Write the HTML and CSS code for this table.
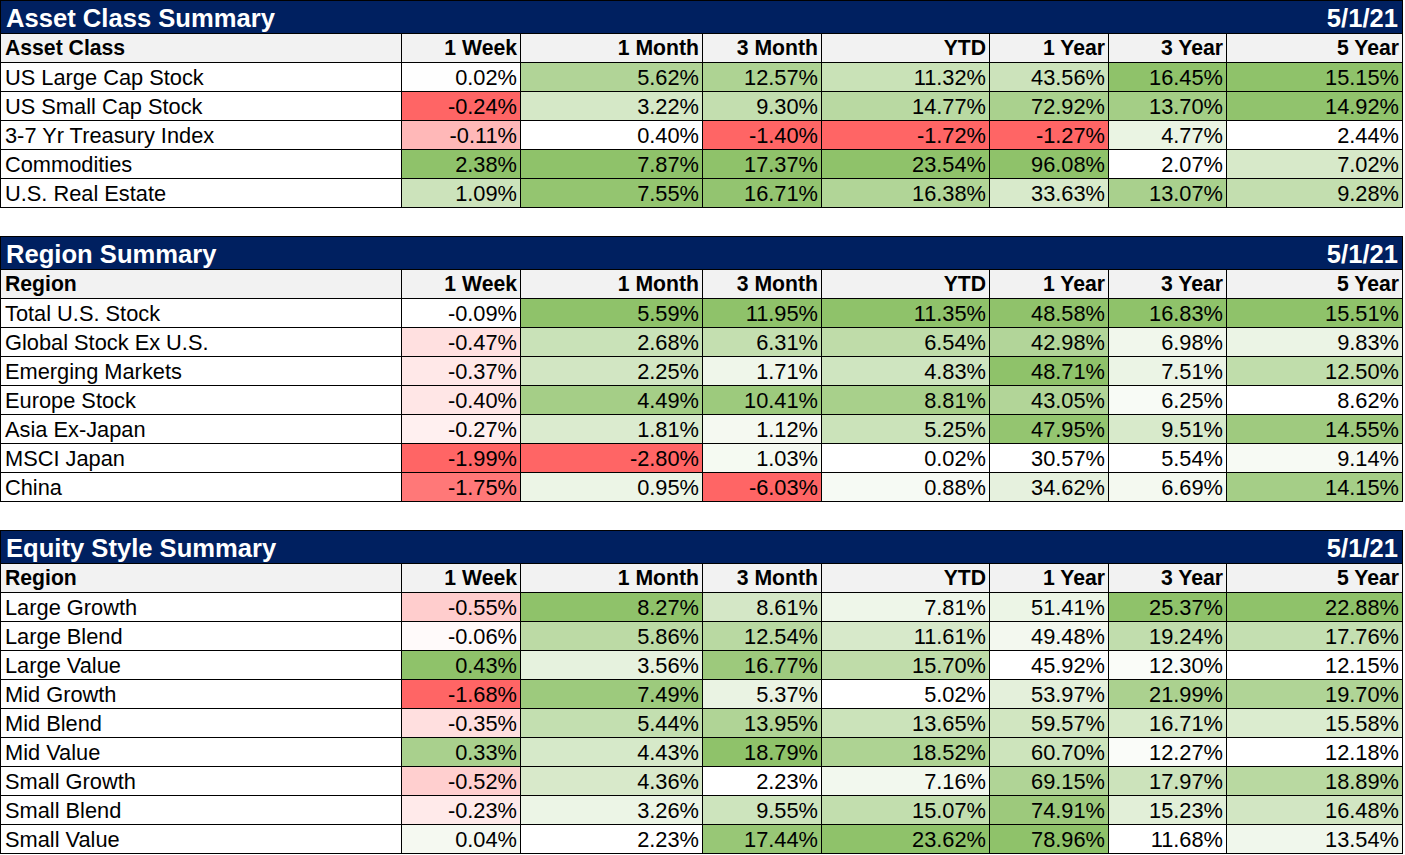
FILE: index.html
```html
<!DOCTYPE html>
<html lang="en">
<head>
<meta charset="utf-8">
<title>Performance Summary</title>
<link rel="stylesheet" href="styles.css">
</head>
<body>
<main class="page">
  <section class="sheet">
    <div class="title"><span>Asset Class Summary</span><span>5/1/21</span></div>
    <div class="grid">
      <div class="h l">Asset Class</div><div class="h">1 Week</div><div class="h">1 Month</div><div class="h">3 Month</div><div class="h">YTD</div><div class="h">1 Year</div><div class="h">3 Year</div><div class="h">5 Year</div>
      <div class="l">US Large Cap Stock</div><div class="v">0.02%</div><div class="v">5.62%</div><div class="v">12.57%</div><div class="v">11.32%</div><div class="v">43.56%</div><div class="v">16.45%</div><div class="v">15.15%</div>
      <div class="l">US Small Cap Stock</div><div class="v">-0.24%</div><div class="v">3.22%</div><div class="v">9.30%</div><div class="v">14.77%</div><div class="v">72.92%</div><div class="v">13.70%</div><div class="v">14.92%</div>
      <div class="l">3-7 Yr Treasury Index</div><div class="v">-0.11%</div><div class="v">0.40%</div><div class="v">-1.40%</div><div class="v">-1.72%</div><div class="v">-1.27%</div><div class="v">4.77%</div><div class="v">2.44%</div>
      <div class="l">Commodities</div><div class="v">2.38%</div><div class="v">7.87%</div><div class="v">17.37%</div><div class="v">23.54%</div><div class="v">96.08%</div><div class="v">2.07%</div><div class="v">7.02%</div>
      <div class="l">U.S. Real Estate</div><div class="v">1.09%</div><div class="v">7.55%</div><div class="v">16.71%</div><div class="v">16.38%</div><div class="v">33.63%</div><div class="v">13.07%</div><div class="v">9.28%</div>
    </div>
  </section>

  <section class="sheet">
    <div class="title"><span>Region Summary</span><span>5/1/21</span></div>
    <div class="grid">
      <div class="h l">Region</div><div class="h">1 Week</div><div class="h">1 Month</div><div class="h">3 Month</div><div class="h">YTD</div><div class="h">1 Year</div><div class="h">3 Year</div><div class="h">5 Year</div>
      <div class="l">Total U.S. Stock</div><div class="v">-0.09%</div><div class="v">5.59%</div><div class="v">11.95%</div><div class="v">11.35%</div><div class="v">48.58%</div><div class="v">16.83%</div><div class="v">15.51%</div>
      <div class="l">Global Stock Ex U.S.</div><div class="v">-0.47%</div><div class="v">2.68%</div><div class="v">6.31%</div><div class="v">6.54%</div><div class="v">42.98%</div><div class="v">6.98%</div><div class="v">9.83%</div>
      <div class="l">Emerging Markets</div><div class="v">-0.37%</div><div class="v">2.25%</div><div class="v">1.71%</div><div class="v">4.83%</div><div class="v">48.71%</div><div class="v">7.51%</div><div class="v">12.50%</div>
      <div class="l">Europe Stock</div><div class="v">-0.40%</div><div class="v">4.49%</div><div class="v">10.41%</div><div class="v">8.81%</div><div class="v">43.05%</div><div class="v">6.25%</div><div class="v">8.62%</div>
      <div class="l">Asia Ex-Japan</div><div class="v">-0.27%</div><div class="v">1.81%</div><div class="v">1.12%</div><div class="v">5.25%</div><div class="v">47.95%</div><div class="v">9.51%</div><div class="v">14.55%</div>
      <div class="l">MSCI Japan</div><div class="v">-1.99%</div><div class="v">-2.80%</div><div class="v">1.03%</div><div class="v">0.02%</div><div class="v">30.57%</div><div class="v">5.54%</div><div class="v">9.14%</div>
      <div class="l">China</div><div class="v">-1.75%</div><div class="v">0.95%</div><div class="v">-6.03%</div><div class="v">0.88%</div><div class="v">34.62%</div><div class="v">6.69%</div><div class="v">14.15%</div>
    </div>
  </section>

  <section class="sheet">
    <div class="title"><span>Equity Style Summary</span><span>5/1/21</span></div>
    <div class="grid">
      <div class="h l">Region</div><div class="h">1 Week</div><div class="h">1 Month</div><div class="h">3 Month</div><div class="h">YTD</div><div class="h">1 Year</div><div class="h">3 Year</div><div class="h">5 Year</div>
      <div class="l">Large Growth</div><div class="v">-0.55%</div><div class="v">8.27%</div><div class="v">8.61%</div><div class="v">7.81%</div><div class="v">51.41%</div><div class="v">25.37%</div><div class="v">22.88%</div>
      <div class="l">Large Blend</div><div class="v">-0.06%</div><div class="v">5.86%</div><div class="v">12.54%</div><div class="v">11.61%</div><div class="v">49.48%</div><div class="v">19.24%</div><div class="v">17.76%</div>
      <div class="l">Large Value</div><div class="v">0.43%</div><div class="v">3.56%</div><div class="v">16.77%</div><div class="v">15.70%</div><div class="v">45.92%</div><div class="v">12.30%</div><div class="v">12.15%</div>
      <div class="l">Mid Growth</div><div class="v">-1.68%</div><div class="v">7.49%</div><div class="v">5.37%</div><div class="v">5.02%</div><div class="v">53.97%</div><div class="v">21.99%</div><div class="v">19.70%</div>
      <div class="l">Mid Blend</div><div class="v">-0.35%</div><div class="v">5.44%</div><div class="v">13.95%</div><div class="v">13.65%</div><div class="v">59.57%</div><div class="v">16.71%</div><div class="v">15.58%</div>
      <div class="l">Mid Value</div><div class="v">0.33%</div><div class="v">4.43%</div><div class="v">18.79%</div><div class="v">18.52%</div><div class="v">60.70%</div><div class="v">12.27%</div><div class="v">12.18%</div>
      <div class="l">Small Growth</div><div class="v">-0.52%</div><div class="v">4.36%</div><div class="v">2.23%</div><div class="v">7.16%</div><div class="v">69.15%</div><div class="v">17.97%</div><div class="v">18.89%</div>
      <div class="l">Small Blend</div><div class="v">-0.23%</div><div class="v">3.26%</div><div class="v">9.55%</div><div class="v">15.07%</div><div class="v">74.91%</div><div class="v">15.23%</div><div class="v">16.48%</div>
      <div class="l">Small Value</div><div class="v">0.04%</div><div class="v">2.23%</div><div class="v">17.44%</div><div class="v">23.62%</div><div class="v">78.96%</div><div class="v">11.68%</div><div class="v">13.54%</div>
    </div>
  </section>
</main>
<script src="script.js"></script>
</body>
</html>
```

FILE: styles.css
```css
* { box-sizing: border-box; }

html, body {
  margin: 0;
  padding: 0;
  background: #ffffff;
}

body {
  font-family: "Liberation Sans", Arial, sans-serif;
  color: #000000;
}

.page {
  display: flex;
  flex-direction: column;
  gap: 28px;
  width: 1403px;
}

.sheet {
  width: 1403px;
  border: 1px solid #000000;
}

.title {
  height: 32px;
  background: #002060;
  color: #ffffff;
  font-weight: bold;
  font-size: 25.6px;
  line-height: 32px;
  padding: 1px 4px 0 5px;
  display: flex;
  justify-content: space-between;
  white-space: nowrap;
}

.grid {
  display: grid;
  grid-template-columns: 400px 118px 181px 118px 167px 118px 117px 175px;
  grid-auto-rows: 28px;
  gap: 1px;
  padding-top: 1px;
  background: #000000;
}

.grid > div {
  background: #ffffff;
  font-size: 21.8px;
  line-height: 26px;
  height: 28px;
  padding: 2px 3px 0 0;
  text-align: right;
  white-space: nowrap;
  overflow: hidden;
}

.grid > .h {
  background: #f2f2f2;
  font-weight: bold;
  font-size: 21.2px;
  padding-top: 1px;
}

.grid > .l {
  text-align: left;
  padding-left: 4px;
  padding-right: 0;
}
```

FILE: script.js
```js
(function () {
  var GREEN = [143, 194, 106];
  var RED = [255, 101, 101];
  function mix(c, t) {
    t = Math.max(0, Math.min(1, t));
    var r = Math.round(255 + (c[0] - 255) * t);
    var g = Math.round(255 + (c[1] - 255) * t);
    var b = Math.round(255 + (c[2] - 255) * t);
    return 'rgb(' + r + ',' + g + ',' + b + ')';
  }
  var grids = document.querySelectorAll('.grid');
  for (var gi = 0; gi < grids.length; gi++) {
    var cells = grids[gi].querySelectorAll('.v');
    var cols = [[], [], [], [], [], [], []];
    for (var i = 0; i < cells.length; i++) cols[i % 7].push(cells[i]);
    for (var k = 0; k < cols.length; k++) {
      var list = cols[k];
      var vals = list.map(function (c) { return parseFloat(c.textContent); });
      var lo = Math.min.apply(null, vals);
      var hi = Math.max.apply(null, vals);
      for (var j = 0; j < list.length; j++) {
        var v = vals[j], base, t, col;
        if (v >= 0) {
          base = lo > 0 ? lo : 0;
          t = hi > base ? (v - base) / (hi - base) : 0;
          col = mix(GREEN, t);
        } else {
          base = hi < 0 ? hi : 0;
          t = lo < base ? (v - base) / (lo - base) : 0;
          col = mix(RED, t);
        }
        list[j].style.backgroundColor = col;
      }
    }
  }
})();
```
